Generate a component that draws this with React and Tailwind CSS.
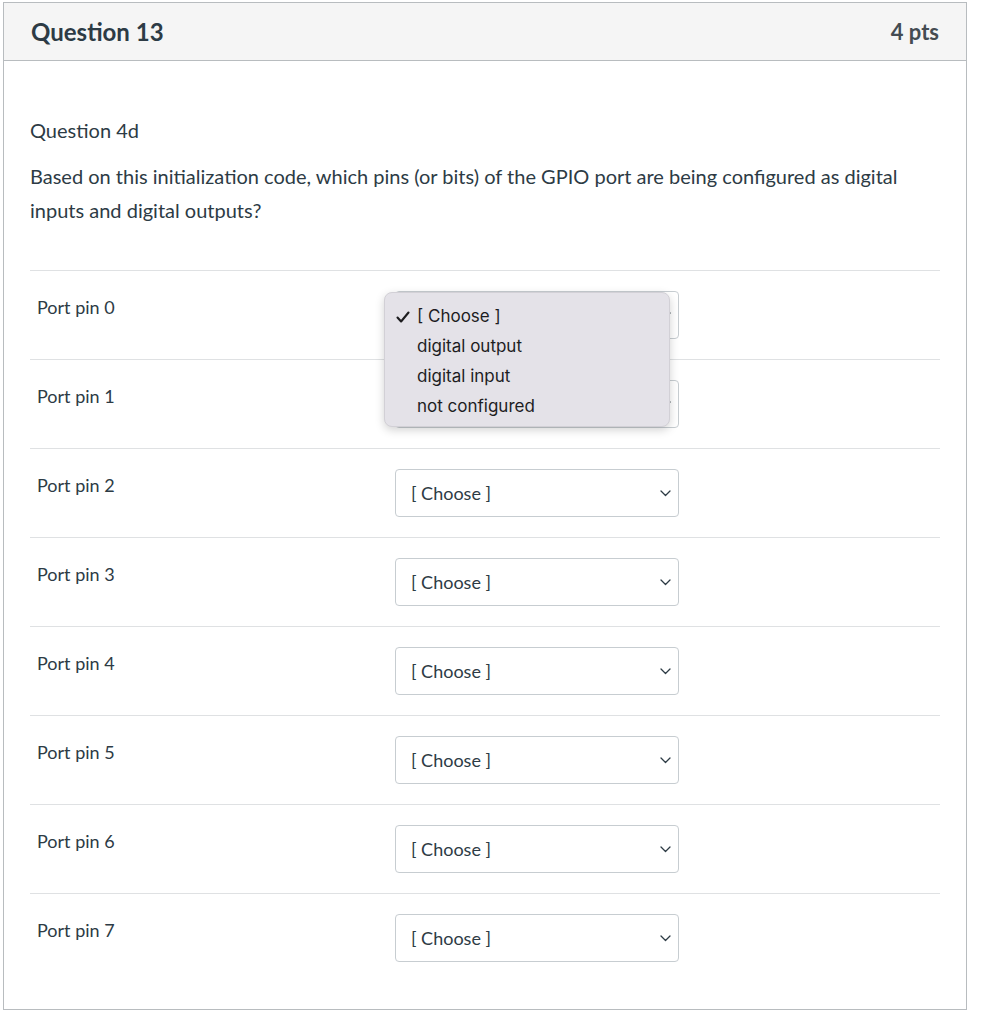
import React from 'react';

const pins = [0, 1, 2, 3, 4, 5, 6, 7];
const options = ['[ Choose ]', 'digital output', 'digital input', 'not configured'];

const Chevron = () => (
  <svg width="11" height="7" viewBox="0 0 11 7" fill="none" className="shrink-0">
    <path d="M1 1l4.5 4.5L10 1" stroke="#2d3b45" strokeWidth="1.3" strokeLinecap="round" strokeLinejoin="round" />
  </svg>
);

const ChooseBox = () => (
  <div className="w-[284px] h-[48px] border border-[#c7cdd1] rounded-[4px] bg-white flex items-center justify-between pl-[15px] pr-[7px] text-[18px] text-[#2d3b45]">
    <span>[ Choose ]</span>
    <Chevron />
  </div>
);

const OpenMenu = () => (
  <div className="absolute top-[21px] left-[-11px] w-[286px] h-[135px] rounded-[8px] bg-[#e4e2e8] border border-[#d2d0d6] shadow-[0_3px_10px_rgba(0,0,0,0.18)] pt-[9px] z-10 font-['Inter',sans-serif]">
    {options.map((opt, i) => (
      <div key={opt} className="h-[30px] flex items-center text-[17px] text-[#1d1d1f]">
        <span className="w-[32px] pl-[11px] flex items-center">
          {i === 0 && (
            <svg width="14" height="12" viewBox="0 0 14 12" fill="none">
              <path d="M1.5 6.5l3.6 4L12.5 1.5" stroke="#1d1d1f" strokeWidth="2.1" strokeLinecap="round" strokeLinejoin="round" />
            </svg>
          )}
        </span>
        <span>{opt}</span>
      </div>
    ))}
  </div>
);

export default function App() {
  return (
    <div className="bg-white min-h-[1024px] pt-[2px] pl-[3px] font-['Lato','Noto_Sans',sans-serif] text-[#2d3b45]">
      <div className="w-[964px] border border-[#b8bcbf]">
        <div className="h-[58px] bg-[#f5f5f5] border-b border-[#b8bcbf] flex items-center justify-between px-[27px]">
          <h2 className="text-[24px] font-bold">Question 13</h2>
          <span className="text-[22px] font-bold text-[#444c52]">4 pts</span>
        </div>
        <div className="px-[26px] pt-[55px] pb-[27px]">
          <p className="text-[20px] leading-[28px]">Question 4d</p>
          <p className="text-[20px] leading-[34px] mt-[15px]">
            Based on this initialization code, which pins (or bits) of the GPIO port are being configured as digital inputs and digital outputs?
          </p>
          <div className="mt-[43px]">
            {pins.map((p) => (
              <div key={p} className="h-[89px] border-t border-[#dfe1e3] flex items-start">
                <div className="w-[365px] pl-[7px] pt-[23px] text-[18px]">Port pin {p}</div>
                <div className="relative pt-[20px]">
                  <ChooseBox />
                  {p === 0 && <OpenMenu />}
                </div>
              </div>
            ))}
          </div>
        </div>
      </div>
    </div>
  );
}
